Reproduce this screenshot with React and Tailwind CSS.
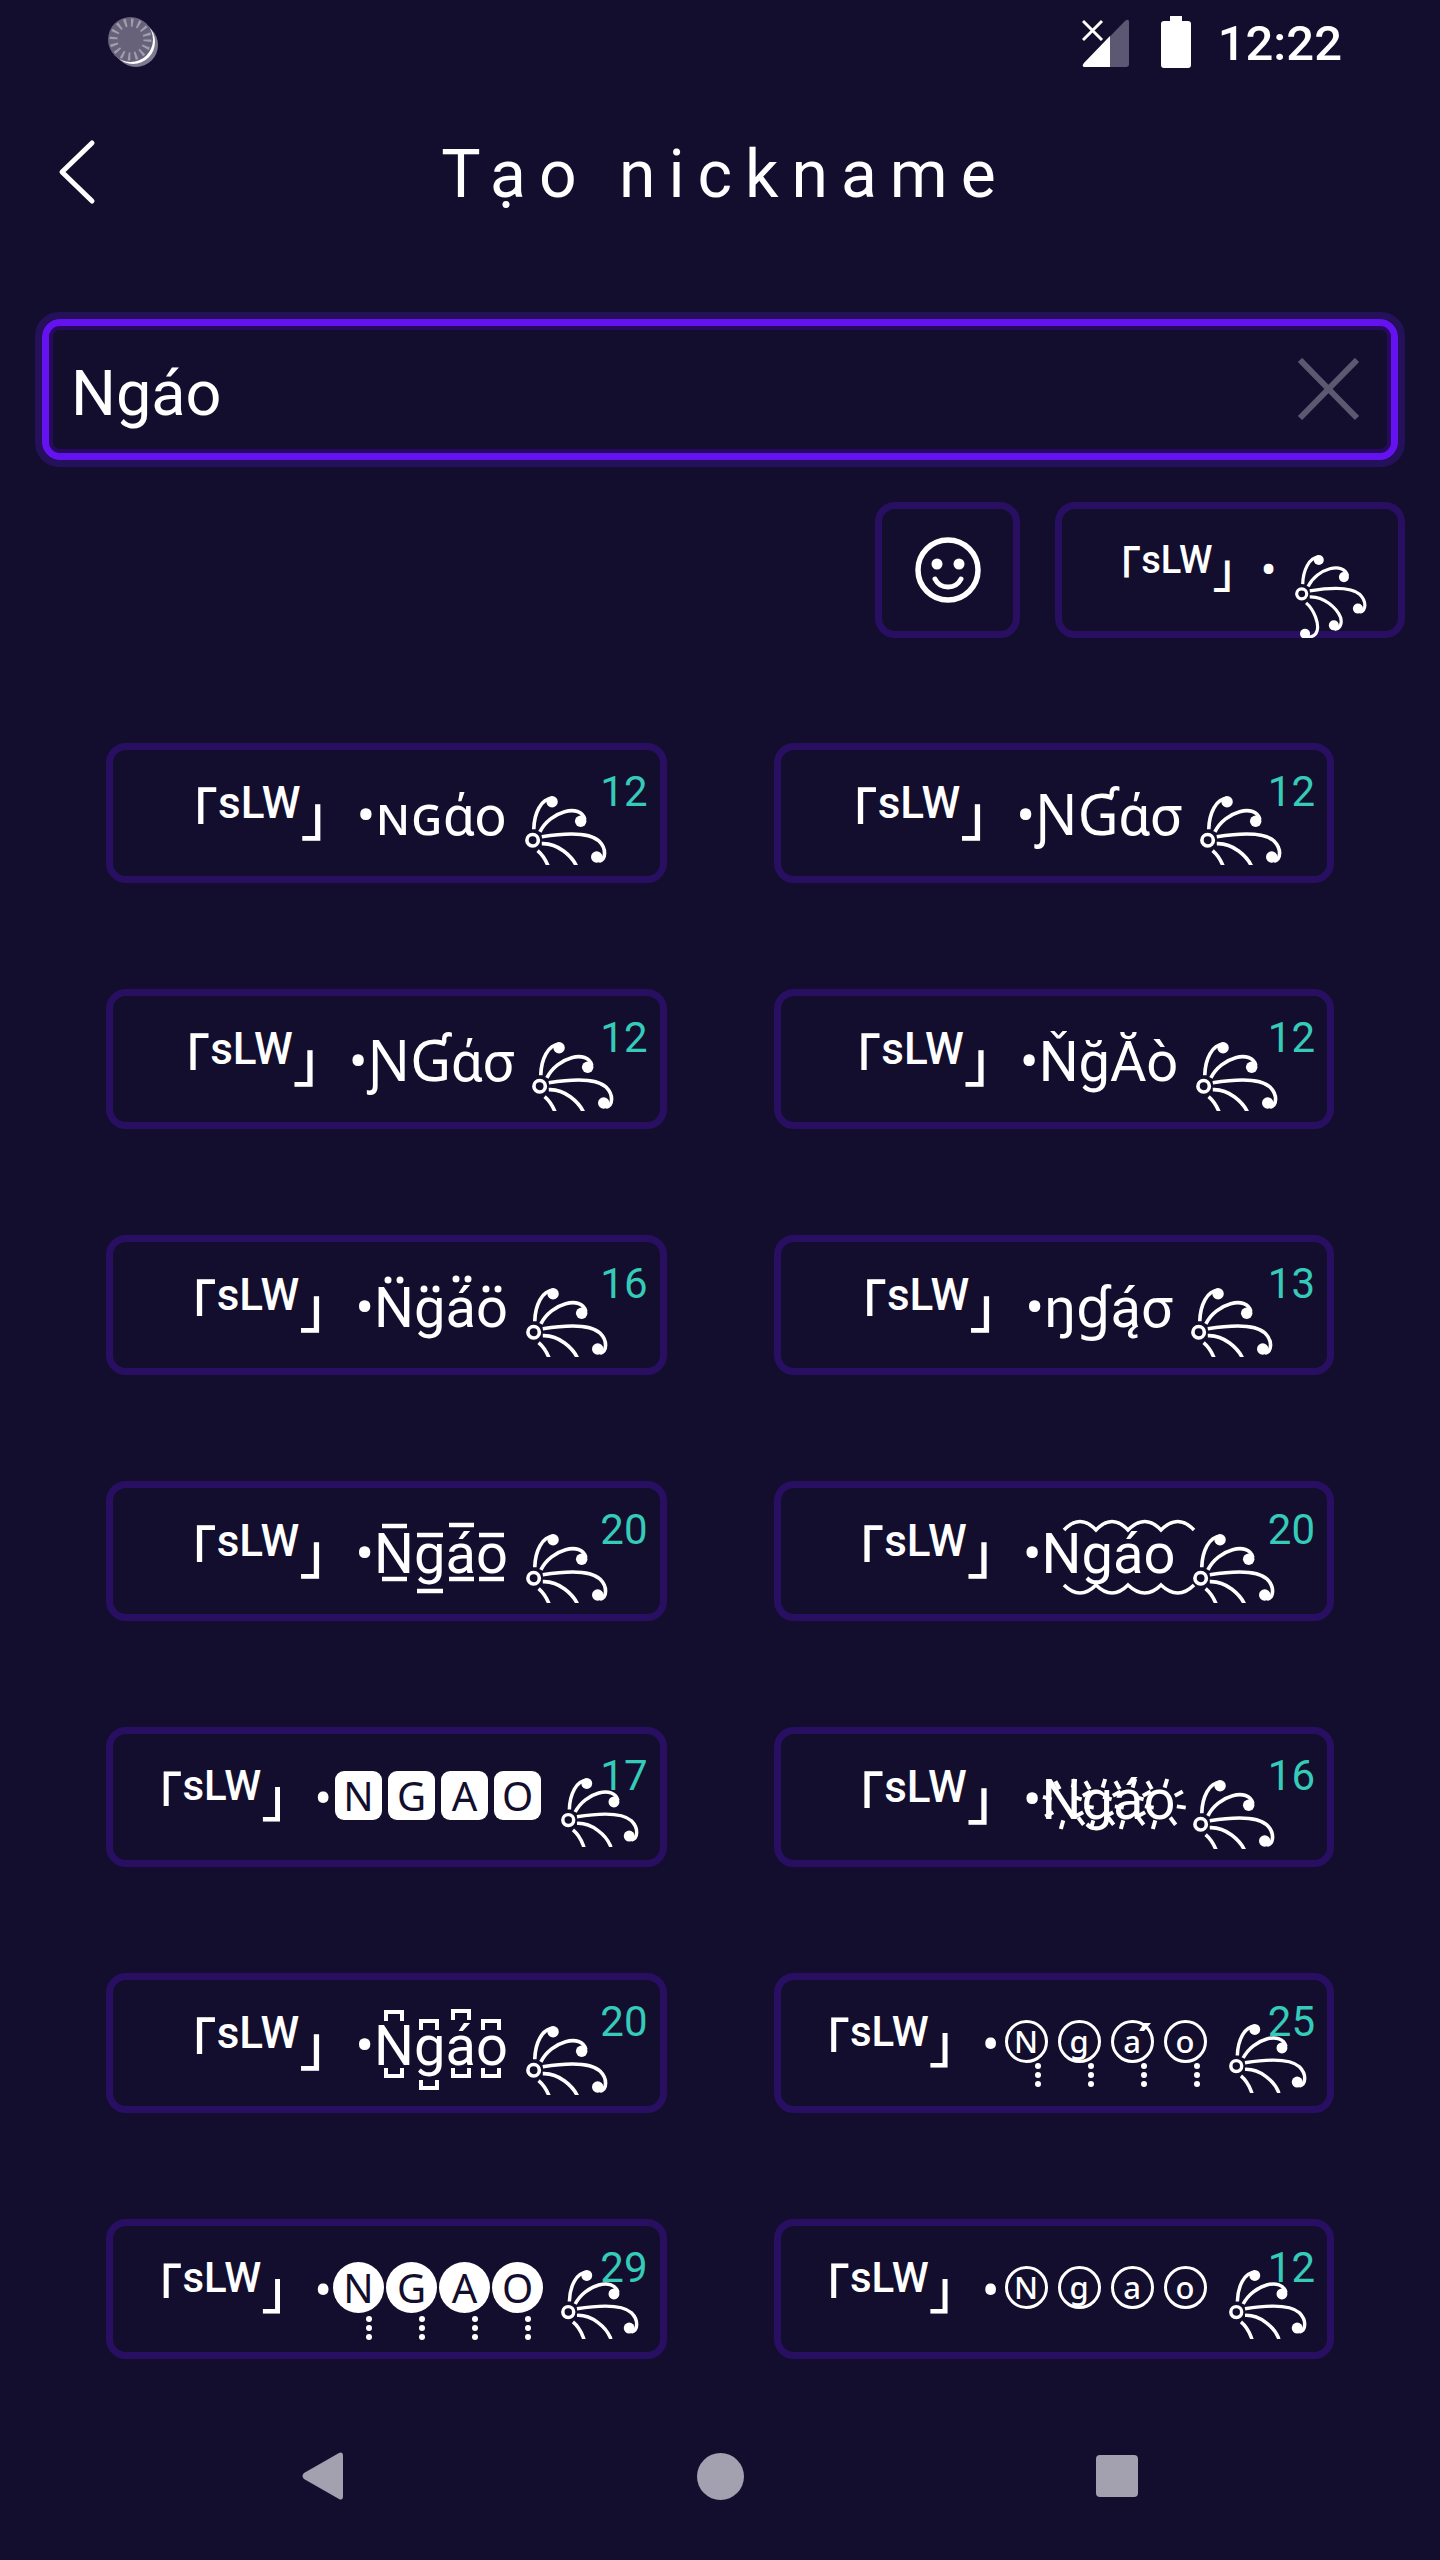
import React from "react";

const BURST = [0, 45, 98, 143, 188, 233, 278, 323];

function Ornament({ className }) {
  return (
    <svg
      viewBox="0 0 215 250"
      preserveAspectRatio="xMinYMin slice"
      className={`inline-block shrink-0 ${className}`}
      fill="none"
      stroke="white"
      strokeWidth="9.5"
      aria-hidden="true"
    >
      <circle cx="20" cy="116" r="15" />
      <path d="M23 87C24 46 42 6 72 6" />
      <path d="M39 94C66 40 146 18 157 62" />
      <path d="M44 107C100 98 168 94 194 118C214 138 213 166 194 171" />
      <path d="M44 125C86 123 124 158 136 186C142 206 134 221 118 222" />
      <path d="M33 143C58 164 72 206 66 226C61 244 46 246 32 245" />
      <g fill="white" stroke="none">
        <circle cx="71" cy="15" r="15" />
        <circle cx="146" cy="66" r="15" />
        <circle cx="188" cy="160" r="15" />
        <circle cx="116" cy="210" r="15" />
        <circle cx="30" cy="235" r="15" />
      </g>
    </svg>
  );
}

function Marks({ children }) {
  return (
    <svg
      width="140"
      height="56"
      className="pointer-events-none absolute left-0 top-0 overflow-visible"
      fill="none"
      stroke="white"
      aria-hidden="true"
    >
      <g transform="translate(0 47)">{children}</g>
    </svg>
  );
}

function Marked({ marks }) {
  return (
    <span className="relative inline-block leading-[56px]">
      Ngáo
      <Marks>{marks}</Marks>
    </span>
  );
}

const dotMarks = (
  <g fill="white" stroke="none">
    {[
      [14, -47],
      [26, -47],
      [50, -38],
      [62, -38],
      [82, -48],
      [94, -48],
      [112, -38],
      [124, -38],
    ].map(([x, y]) => (
      <circle key={x} cx={x} cy={y} r="3.5" />
    ))}
  </g>
);

const barMarks = (
  <path
    strokeWidth="4.5"
    d="M8 -47H33M43 -38H69M75 -48H100M105 -38H130M8 6H33M43 18H69M75 6H100M105 6H130"
  />
);

const waveMarks = (
  <path
    strokeWidth="3.5"
    d="M22 -43Q38 -60 54 -43Q70 -60 86 -43Q103 -60 119 -43Q136 -60 152 -43M22 12Q38 28 54 12Q70 28 86 12Q103 28 119 12Q136 28 152 12"
  />
);

const burstMarks = [26, 56, 86, 118].map((x) => (
  <g key={x} transform={`translate(${x} -15)`} strokeWidth="4">
    {BURST.map((a) => (
      <path key={a} d="M17 0H26" transform={`rotate(${a + 8})`} />
    ))}
  </g>
));

const bracketMarks = (
  <path
    strokeWidth="4"
    d="M12 -44V-53H28V-44M47 -35V-44H63V-35M79 -45V-54H95V-45M109 -35V-44H125V-35M12 3V11H28V3M47 15V23H63V15M79 3V11H95V3M109 3V11H125V3"
  />
);

function Drip({ className }) {
  return (
    <svg
      width="8"
      height="28"
      className={`absolute top-full ${className}`}
      fill="white"
      aria-hidden="true"
    >
      <circle cx="4" cy="6" r="3" />
      <circle cx="4" cy="15" r="3" />
      <circle cx="4" cy="24" r="3" />
    </svg>
  );
}

function Accent() {
  return (
    <svg width="12" height="8" className="absolute right-0 top-0" fill="white" aria-hidden="true">
      <path d="M5 0H12L5 8H0Z" />
    </svg>
  );
}

const tileShapes = {
  square:
    "mx-[3px] h-[49px] w-[47px] rounded-[9px] bg-white align-[6px] text-[40px] font-normal text-[#130e2e]",
  disc: "mx-px h-[51px] w-[51px] rounded-full bg-white align-[6px] text-[40px] font-normal text-[#130e2e]",
  ring: "mx-[5px] h-[43px] w-[43px] rounded-full border-[3px] border-white align-[10px] text-[31px] font-medium text-white",
};

function Tiles({ letters, shape, drip, accent }) {
  return [...letters].map((c, i) => (
    <span
      key={i}
      className={`relative inline-flex items-center justify-center font-['Noto_Sans',sans-serif] leading-none ${tileShapes[shape]}`}
    >
      {c}
      {drip && <Drip className={shape === "ring" ? "left-[26px]" : "left-[32px]"} />}
      {accent === i && <Accent />}
    </span>
  ));
}

const names = [
  { count: 12, word: "ɴɢάο" },
  { count: 12, word: "ƝƓάσ" },
  { count: 12, word: "ƝƓάσ" },
  { count: 12, word: "ŇğĂò" },
  { count: 16, word: <Marked marks={dotMarks} /> },
  { count: 13, word: "ŋɠą́σ" },
  { count: 20, word: <Marked marks={barMarks} /> },
  { count: 20, word: <Marked marks={waveMarks} /> },
  { count: 17, small: true, word: <Tiles letters="NGAO" shape="square" /> },
  { count: 16, word: <Marked marks={burstMarks} /> },
  { count: 20, word: <Marked marks={bracketMarks} /> },
  { count: 25, small: true, word: <Tiles letters="Ngao" shape="ring" drip accent={2} /> },
  { count: 29, small: true, word: <Tiles letters="NGAO" shape="disc" drip /> },
  { count: 12, small: true, word: <Tiles letters="Ngao" shape="ring" /> },
];

function NameCard({ count, word, small }) {
  return (
    <li>
      <button
        type="button"
        className={`relative flex h-[140px] w-full items-center justify-center rounded-[20px] border-[7px] border-[#280f62] ${small ? "pt-[16px]" : "pt-[20px]"}`}
      >
        <span
          className={`block whitespace-pre leading-[70px] ${small ? "text-[53px]" : "text-[56px]"}`}
        >
          <span className="font-medium">「</span>
          <span
            className={`align-[17px] leading-[0px] font-medium ${small ? "text-[42px]" : "text-[44px]"}`}
          >
            sLW
          </span>
          <span className="font-medium">」</span>•{word}
          <Ornament
            className={
              small
                ? "mr-[4px] ml-[17px] h-[69px] w-[78px] align-[-30px]"
                : "mr-[4px] ml-[18px] h-[69px] w-[82px] align-[-30px]"
            }
          />
        </span>
        <span className="absolute top-[17px] right-[12px] text-[42px] leading-[50px] text-[#36cbb8]">
          {count}
        </span>
      </button>
    </li>
  );
}

export default function App() {
  return (
    <div className="flex min-h-screen flex-col bg-[#130e2e] font-[Roboto,'Noto_Sans','DejaVu_Sans','Noto_Sans_CJK_JP',sans-serif] text-white">
      <div className="flex h-[84px] items-center justify-between pr-[98px] pl-[108px]">
        <svg width="50" height="50" viewBox="0 0 50 50" aria-hidden="true">
          <circle cx="28" cy="28" r="22" fill="#7d7990" />
          <circle cx="25" cy="25" r="22" fill="white" />
          <circle cx="22.5" cy="22.5" r="22.5" fill="#676279" />
          <circle
            cx="22.5"
            cy="22.5"
            r="17"
            fill="none"
            stroke="#a09dae"
            strokeWidth="8"
            strokeDasharray="2.2 4.476"
          />
        </svg>
        <div className="flex items-center">
          <svg width="48" height="52" viewBox="0 0 48 52" className="mr-[31px]" aria-hidden="true">
            <path d="M47 6V48Q47 51 44 51H3Q-1 51 2 47L43 5Q47 2 47 6Z" fill="#5c5772" />
            <path d="M28 20V51H3Q-1 51 2 47Z" fill="white" />
            <path d="M1 5L20 24M20 5L1 24" stroke="white" strokeWidth="3" />
          </svg>
          <svg width="30" height="52" viewBox="0 0 30 52" className="mr-[27px]" aria-hidden="true">
            <path
              d="M9 0H21V5H27Q30 5 30 8V49Q30 52 27 52H3Q0 52 0 49V8Q0 5 3 5H9Z"
              fill="white"
            />
          </svg>
          <span className="pt-[4px] text-[49px] leading-[56px] font-medium">12:22</span>
        </div>
      </div>

      <header className="grid h-[176px] grid-cols-[160px_1fr_160px] items-center">
        <button type="button" aria-label="Back" className="pl-[58px]">
          <svg width="38" height="66" viewBox="0 0 38 66" fill="none" aria-hidden="true">
            <path
              d="M34 4L4 33L34 62"
              stroke="white"
              strokeWidth="5"
              strokeLinecap="round"
              strokeLinejoin="round"
            />
          </svg>
        </button>
        <h1 className="pt-[6px] pl-[10px] text-center text-[66px] leading-[78px] font-normal tracking-[13px]">
          Tạo nickname
        </h1>
      </header>

      <main className="flex flex-1 flex-col">
        <div className="mx-[35px] mt-[52px] rounded-[24px] border-[7px] border-[#25105a]">
          <label className="flex h-[141px] items-center rounded-[18px] border-[7px] border-[#6412f0] pr-[30px] pl-[22px] shadow-[inset_0_0_0_4px_#27095f]">
            <input
              type="text"
              aria-label="Nickname"
              defaultValue="Ngáo"
              className="h-[84px] min-w-0 flex-1 bg-transparent pt-[8px] text-[63px] leading-[76px] text-white outline-none"
            />
            <button type="button" aria-label="Clear">
              <svg width="64" height="64" viewBox="0 0 64 64" aria-hidden="true">
                <path d="M3 2L60 60M60 2L3 60" stroke="#5d5871" strokeWidth="6" />
              </svg>
            </button>
          </label>
        </div>

        <div className="mt-[35px] mr-[35px] flex justify-end gap-[35px]">
          <button
            type="button"
            aria-label="Emoji"
            className="flex h-[136px] w-[145px] items-center justify-center rounded-[20px] border-[7px] border-[#280f62]"
          >
            <svg width="66" height="66" viewBox="0 0 66 66" fill="none" aria-hidden="true">
              <circle cx="33" cy="33" r="30" stroke="white" strokeWidth="5.5" />
              <circle cx="22" cy="27" r="5.5" fill="white" />
              <circle cx="44" cy="27" r="5.5" fill="white" />
              <path
                d="M20 42Q24 50 33 50Q42 50 46 42"
                stroke="white"
                strokeWidth="5"
                strokeLinecap="round"
              />
            </svg>
          </button>
          <button
            type="button"
            className="flex h-[136px] w-[350px] items-center justify-center rounded-[20px] border-[7px] border-[#280f62] pt-[39px]"
          >
            <span className="block text-[48px] leading-[60px] whitespace-pre">
              <span className="font-medium">「</span>
              <span className="align-[14px] text-[38px] leading-[0px] font-medium">sLW</span>
              <span className="font-medium">」</span>•
              <Ornament className="ml-[18px] h-[83px] w-[72px] align-[-51px]" />
            </span>
          </button>
        </div>

        <ul className="mx-[106px] mt-[105px] grid grid-cols-2 gap-x-[107px] gap-y-[106px]">
          {names.map((n, i) => (
            <NameCard key={i} {...n} />
          ))}
        </ul>
      </main>

      <nav className="flex h-[168px] items-center justify-between px-[21%]" aria-label="System">
        <button type="button" aria-label="Back">
          <svg width="42" height="48" viewBox="0 0 42 48" fill="#a3a0b0" aria-hidden="true">
            <path d="M37 1Q41 -1 41 4V44Q41 49 37 47L2 27Q-1 24 2 21Z" />
          </svg>
        </button>
        <button type="button" aria-label="Home" className="h-[47px] w-[47px] rounded-full bg-[#a3a0b0]" />
        <button type="button" aria-label="Recent apps" className="h-[42px] w-[42px] rounded-[4px] bg-[#a3a0b0]" />
      </nav>
    </div>
  );
}
